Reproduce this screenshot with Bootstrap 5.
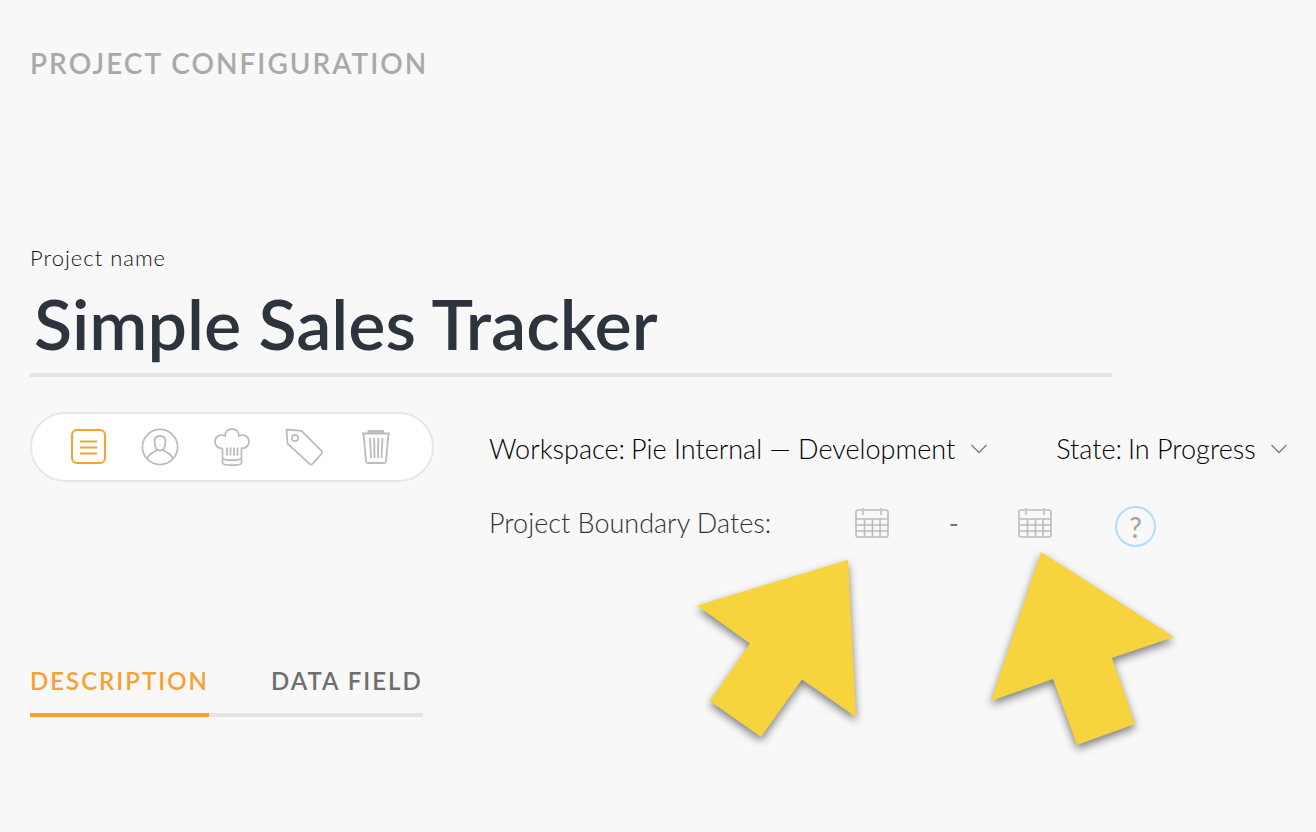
<!DOCTYPE html>
<html lang="en">
<head>
<meta charset="utf-8">
<meta name="viewport" content="width=device-width, initial-scale=1">
<title>Project Configuration</title>
<link href="https://cdn.jsdelivr.net/npm/bootstrap@5.3.0/dist/css/bootstrap.min.css" rel="stylesheet">
<style>
  body { background: #f8f8f8; font-family: Lato, "Open Sans", sans-serif; color: #111; }
  svg { display: block; }
  .page { padding: 43px 28px 44px 30px; }
  .page-title { font-size: 28px; line-height: 40px; font-weight: 600; letter-spacing: 2px; color: #a9a9a9; text-transform: uppercase; margin-bottom: 161px; }
  .name-field { width: 86%; }
  .name-field label { font-size: 22px; line-height: 28px; font-weight: 300; letter-spacing: 1px; }
  .name-input { font-size: 70px; line-height: 92px; height: 105px; font-weight: 600; color: #2d343d; background: transparent; border: 0; border-bottom: 4px solid #e4e4e4; border-radius: 0; padding: 0 4px; }
  .tool-pill { background: #fff; border: 2px solid #e6e6e6; height: 70px; padding: 0 36px; gap: 32px; }
  .tool-btn { border: 0; background: none; padding: 0; color: #bcbcbc; }
  .tool-btn.active { color: #f7a22f; }
  .settings { margin-top: 35px; gap: 55px; }
  .field-text { font-size: 27px; line-height: 40px; font-weight: 300; white-space: nowrap; color: #000; }
  .plain-select { border: 0; background-color: transparent; width: auto; padding: 0 32px 0 6px; height: 40px;
    background-image: url("data:image/svg+xml,%3Csvg xmlns='http://www.w3.org/2000/svg' viewBox='0 0 18 12'%3E%3Cpath d='M1.500 2 9 9.500 16.500 2' fill='none' stroke='%23808080' stroke-width='1.500'/%3E%3C/svg%3E");
    background-size: 18px 12px; background-position: right 0 center; }
  .settings-main { padding-top: 17px; }
  .dates-row { margin-top: 34px; }
  .dates-label { color: #333; margin-right: 84px; }
  .date-dash { color: #777; width: 129px; font-weight: 400; }
  .date-pick { padding-top: 4px; }
  .help-btn { width: 41px; height: 41px; border: 2px solid #b5dbff; border-radius: 50%; background: none; color: #a6a6a6; font-size: 28px; line-height: 36px; font-weight: 500; padding: 0; margin: 3px 0 0 63px; }
  .pointer-mark { position: absolute; pointer-events: none; overflow: visible; filter: drop-shadow(0 4px 4px rgba(0,0,0,.5)); }
  .mark-start { right: 32px; top: 57px; }
  .mark-end { left: -27px; top: 49px; }
  .config-tabs { display: inline-flex; gap: 62px; margin-top: 118px; border-bottom: 4px solid #e4e4e4; }
  .config-tabs .nav-link { font-size: 24px; line-height: 32px; font-weight: 600; letter-spacing: 2px; color: #6e6e6e; padding: 0 0 16px; margin-bottom: -4px; border-bottom: 4px solid transparent; text-transform: uppercase; }
  .config-tabs .nav-link.active { color: #f7a22f; border-color: #f7a22f; }
</style>
</head>
<body>
<svg width="0" height="0" class="position-absolute" aria-hidden="true">
  <symbol id="calendar" viewBox="0 0 34 32">
    <g fill="none" stroke="#bcbcbc" stroke-width="1.600">
      <path d="M7 3H3Q1 3 1 5V28Q1 30 3 30H31Q33 30 33 28V5Q33 3 31 3H27M9 3H25M8 1V8M26 1V8"/>
      <path d="M1 12H33M1 18H33M1 24H33M9.500 12V30M17.500 12V30M25 12V30"/>
    </g>
  </symbol>
</svg>
<main class="container-fluid page">
  <h1 class="page-title">Project Configuration</h1>
  <div class="name-field">
    <label for="projectName" class="d-block">Project name</label>
    <input id="projectName" class="form-control name-input shadow-none" type="text" value="Simple Sales Tracker">
  </div>

  <div class="settings d-flex align-items-start">
    <div class="tool-pill rounded-pill d-flex align-items-center flex-shrink-0" role="toolbar" aria-label="Project sections">
      <button class="tool-btn active" type="button" aria-label="Details">
        <svg width="40" height="40" viewBox="0 0 40 40" fill="none" stroke="currentColor" stroke-width="2"><rect x="4" y="3" width="33" height="33" rx="5"/><path d="M12 14.500H29M12 20.500H29M12 26.500H29"/></svg>
      </button>
      <button class="tool-btn" type="button" aria-label="People">
        <svg width="40" height="40" viewBox="0 0 40 40" fill="none" stroke="currentColor" stroke-width="1.800"><circle cx="20" cy="20" r="17.600"/><path d="M20 9C16.500 9 14.500 11 14.500 14.500L15 18.500C15.700 21.500 17.500 23.500 20 23.500S24.300 21.500 25 18.500L25.500 14.500C25.500 11 23.500 9 20 9ZM17 22.500C16 25.500 9.500 24.500 7.200 32M23 22.500C24 25.500 30.500 24.500 32.800 32"/></svg>
      </button>
      <button class="tool-btn" type="button" aria-label="Recipes">
        <svg width="40" height="40" viewBox="0 0 40 40" fill="none" stroke="currentColor" stroke-width="1.800"><path d="M10.500 21.500V36C10.500 38.800 29.500 38.800 29.500 36V21.500C34 21.500 37 18.500 37 14.500C37 9.500 32 6.500 27 9C27 4.500 24 2 20 2S13 4.500 13 9C8 6.500 3 9.500 3 14.500C3 18.500 6 21.500 10.500 21.500M10.500 32C15 33.500 25 33.500 29.500 32M15 20.500V28.500M18.500 20.500V28.500M22 20.500V28.500M25.500 20.500V28.500"/></svg>
      </button>
      <button class="tool-btn" type="button" aria-label="Tags">
        <svg width="40" height="40" viewBox="0 0 40 40" fill="none" stroke="currentColor" stroke-width="1.800" stroke-linejoin="round"><path d="M2.500 2.500 17.500 3.800 37.500 23.800Q39 25.300 37.500 26.800L28.500 36.800Q27 38.300 25.500 36.800L3.500 16.500Z"/><circle cx="11" cy="11" r="3.200"/></svg>
      </button>
      <button class="tool-btn" type="button" aria-label="Delete">
        <svg width="40" height="40" viewBox="0 0 40 40" fill="none" stroke="currentColor" stroke-width="1.800"><path d="M6 6.500H34M12.500 6V4H27V6M12.500 5H27M7.500 6.500 10 34Q10.200 36 12 36H28Q29.800 36 30 34L32.500 6.500M14 11 15 31M18.200 11 18.500 31M22.300 11 22 31M26.500 11 25.500 31"/></svg>
      </button>
    </div>

    <div class="settings-main flex-grow-1">
      <div class="d-flex justify-content-between">
        <div class="d-flex align-items-center">
          <label for="workspace" class="field-text">Workspace:</label>
          <select id="workspace" class="form-select plain-select field-text"><option>Pie Internal — Development</option></select>
        </div>
        <div class="d-flex align-items-center">
          <label for="state" class="field-text">State:</label>
          <select id="state" class="form-select plain-select field-text"><option>In Progress</option></select>
        </div>
      </div>
      <div class="dates-row d-flex align-items-start">
        <span class="field-text dates-label">Project Boundary Dates:</span>
        <div class="position-relative date-pick">
          <button class="tool-btn d-block" type="button" aria-label="Start date"><svg width="34" height="32"><use href="#calendar"/></svg></button>
          <svg class="pointer-mark mark-start" width="160" height="178" viewBox="0 0 160 178" aria-hidden="true"><path d="M0 45.500 151 0 159 157 105 119.500 64 177 13 141 53 83.500Z" fill="#f7d33e"/></svg>
        </div>
        <span class="field-text date-dash text-center">-</span>
        <div class="position-relative date-pick">
          <button class="tool-btn d-block" type="button" aria-label="End date"><svg width="34" height="32"><use href="#calendar"/></svg></button>
          <svg class="pointer-mark mark-end" width="184" height="194" viewBox="0 0 184 194" aria-hidden="true"><path d="M50 0 183 85 121 106 144 172 86 193 62 127 0 149Z" fill="#f7d33e"/></svg>
        </div>
        <button class="help-btn" type="button" aria-label="Help">?</button>
      </div>
    </div>
  </div>

  <nav class="nav config-tabs" aria-label="Configuration">
    <a class="nav-link active" href="#description" aria-current="page">Description</a>
    <a class="nav-link" href="#data-field">Data Field</a>
  </nav>
</main>
<script src="https://cdn.jsdelivr.net/npm/bootstrap@5.3.0/dist/js/bootstrap.bundle.min.js"></script>
</body>
</html>
